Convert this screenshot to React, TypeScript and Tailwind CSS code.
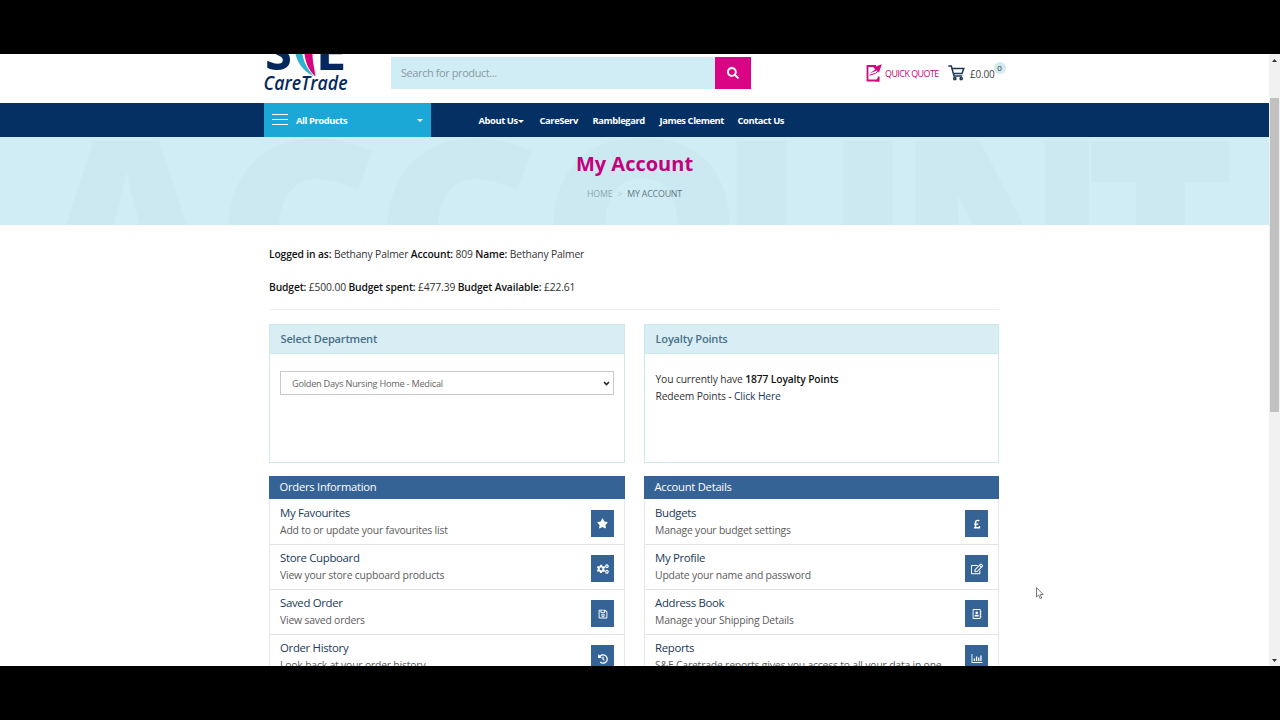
import type { ReactNode } from "react";
import {
  FaStar,
  FaCogs,
  FaRegSave,
  FaHistory,
  FaPoundSign,
  FaRegEdit,
  FaRegAddressBook,
  FaSearch,
} from "react-icons/fa";

function Logo() {
  return (
    <svg className="block h-[40px] w-[90px]" viewBox="0 0 90 40">
      <g fill="#04285c" fontFamily="Open Sans, sans-serif">
        <text x="1" y="15.6" fontSize="50" fontWeight="700" textLength="27" lengthAdjust="spacingAndGlyphs">S</text>
        <text x="51.5" y="15.6" fontSize="50" fontWeight="700" textLength="31" lengthAdjust="spacingAndGlyphs">E</text>
      </g>
      <path d="M31.5 0C33.5 9 39 17 50 22.5C43.5 15 39.5 8 38.5 0Z" fill="#2fb0cf" />
      <path d="M40.5 0C41.5 9 45 17 51.5 22.5C50.5 14 48.5 8 48.5 0Z" fill="#d6057f" />
      <text
        x="-0.5"
        y="35.5"
        fontFamily="Open Sans, sans-serif"
        fontSize="19"
        fontStyle="italic"
        fontWeight="600"
        fill="#04285c"
        textLength="84"
        lengthAdjust="spacingAndGlyphs"
      >
        CareTrade
      </text>
    </svg>
  );
}

function QuoteIcon() {
  return (
    <svg className="block h-[18px] w-[16px]" viewBox="0 0 16 18" fill="none">
      <path d="M10 2H1.5V16.5H12.5V12.5" stroke="#cf0a80" strokeWidth="1.8" />
      <path d="M15.8 0.2L7 3.6L9.4 5.2L3.6 9.6L10.6 6.6L13 8.4Z" fill="#cf0a80" />
      <path d="M3.5 11.2L9.5 9.4L12 7.5" stroke="#cf0a80" strokeWidth="1" />
      <path d="M9 17.4L13.3 12.6V17.4Z" fill="#cf0a80" />
    </svg>
  );
}

function CartIcon() {
  return (
    <svg className="block h-[16px] w-[17px]" viewBox="0 0 17 16" fill="none" stroke="#1d3557" strokeWidth="1.5">
      <path d="M0.3 1H3.3L6 11H14.2M4 3.4H15.8L14 8.6H5.4" />
      <circle cx="6.8" cy="13.6" r="1.1" />
      <circle cx="13.2" cy="13.6" r="1.1" />
    </svg>
  );
}

function BarChartIcon() {
  return (
    <svg width="12" height="11" viewBox="0 0 12 11" fill="currentColor">
      <path d="M0.5 1H1.4V9H11.5V9.9H0.5ZM2.7 5.6H4V8.1H2.7ZM4.9 3.6H6.2V8.1H4.9ZM7.1 4.6H8.4V8.1H7.1ZM9.3 2.4H10.6V8.1H9.3Z" />
    </svg>
  );
}

function Caret() {
  return (
    <svg width="6" height="3" viewBox="0 0 6 3">
      <path d="M0 0H6L3 3Z" fill="#fff" />
    </svg>
  );
}

function Header() {
  return (
    <header className="flex h-[49px] shrink-0 pl-[264px]">
      <Logo />
      <div className="ml-[37px] mt-[3px] flex h-[32px] w-[360px]">
        <div className="flex flex-1 items-center bg-[#d0ecf4] pl-[10px] text-[11px] tracking-[-0.42px] text-[#8a9ba5]">
          Search for product...
        </div>
        <div className="flex w-[36px] items-center justify-center bg-[#da0584] text-white">
          <FaSearch size={12} />
        </div>
      </div>
      <div className="ml-[115px] mt-[10px] flex h-[18px] items-center">
        <QuoteIcon />
        <span className="ml-[3px] w-[63px] whitespace-nowrap pt-px text-[8.9px] tracking-[-0.5px] text-[#b80a72]">QUICK QUOTE</span>
        <CartIcon />
        <span className="ml-[5px] mt-[3px] text-[10px] tracking-[-0.2px] text-[#444]">£0.00</span>
        <span className="-ml-px -mt-[10px] flex size-[12px] items-center justify-center rounded-full bg-[#d3e9f0] text-[8px] text-[#333]">
          0
        </span>
      </div>
    </header>
  );
}

function Nav() {
  return (
    <nav className="flex h-[34px] shrink-0 items-stretch bg-[#043064] pl-[264px] text-[9.4px] font-bold tracking-[-0.42px] text-white">
      <div className="flex w-[167px] items-center bg-[#1ba8d7] pl-[8px] pr-[8px]">
        <div className="flex w-[16px] flex-col gap-[4px] pb-px">
          <i className="h-px bg-white" />
          <i className="h-px bg-white" />
          <i className="h-px bg-white" />
        </div>
        <span className="ml-[8px] flex-1 pt-[2px]">All Products</span>
        <Caret />
      </div>
      <div className="ml-[47.5px] flex items-center whitespace-nowrap pt-[2px]">
        <span className="w-[39px]">About Us</span>
        <span className="w-[22px]">
          <Caret />
        </span>
        <span className="w-[53px]">CareServ</span>
        <span className="w-[67px]">Ramblegard</span>
        <span className="w-[78px]">James Clement</span>
        <span>Contact Us</span>
      </div>
    </nav>
  );
}

function Banner() {
  return (
    <section className="relative h-[88px] shrink-0 overflow-hidden bg-[#d0ecf4] text-center">
      <svg className="absolute inset-0" width="1269" height="88" viewBox="0 0 1269 88" aria-hidden="true">
        <text
          x="34 215 374 540 718 896 1085"
          y="187"
          fontFamily="Open Sans, sans-serif"
          fontWeight="800"
          fontSize="255"
          fill="#cce9f1"
        >
          ACCOUNT
        </text>
      </svg>
      <div className="relative">
        <h1 className="pt-[13px] text-[20px] font-bold leading-[28px] text-[#c5007c]">My Account</h1>
        <p className="mt-[9px] flex justify-center text-[8.8px] leading-[14px] tracking-[-0.18px] text-[#5f7883]">
          <span className="text-[#8fa6ae]">HOME</span>
          <span className="mx-[5px] text-[#b5ccd4]">&gt;</span>
          <span>MY ACCOUNT</span>
        </p>
      </div>
    </section>
  );
}

function Card({ title, children }: { title: string; children: ReactNode }) {
  return (
    <div className="h-[139px] border border-[#cbe9ea] bg-white">
      <div className="flex h-[29px] items-center border-b border-[#cbe9ea] bg-[#d9eef4] pl-[10.5px] text-[11.1px] font-semibold tracking-[-0.21px] text-[#4a7088]">
        {title}
      </div>
      <div className="px-[10px]">{children}</div>
    </div>
  );
}

type Row = { title: string; text: string; icon: ReactNode };

const orders: Row[] = [
  { title: "My Favourites", text: "Add to or update your favourites list", icon: <FaStar size={11} /> },
  { title: "Store Cupboard", text: "View your store cupboard products", icon: <FaCogs size={12} /> },
  { title: "Saved Order", text: "View saved orders", icon: <FaRegSave size={10} /> },
  { title: "Order History", text: "Look back at your order history", icon: <FaHistory size={10} /> },
];

const account: Row[] = [
  { title: "Budgets", text: "Manage your budget settings", icon: <FaPoundSign size={10} /> },
  { title: "My Profile", text: "Update your name and password", icon: <FaRegEdit size={12} /> },
  { title: "Address Book", text: "Manage your Shipping Details", icon: <FaRegAddressBook size={10} /> },
  { title: "Reports", text: "S&E Caretrade reports gives you access to all your data in one", icon: <BarChartIcon /> },
];

function Panel({ title, rows }: { title: string; rows: Row[] }) {
  return (
    <div>
      <h2 className="h-[23px] bg-[#366396] pl-[10.5px] text-[11.2px] leading-[22px] tracking-[-0.24px] text-white">{title}</h2>
      <div className="border-x border-[#e6e6e6] pt-px">
        {rows.map((row) => (
          <div key={row.title} className="flex h-[45px] items-start border-b border-[#e3e3e3] pl-[10px] pr-[10px]">
            <div className="min-w-0 flex-1 whitespace-nowrap pt-[5px]">
              <div className="text-[11.4px] leading-[16px] tracking-[-0.32px] text-[#20395a]">{row.title}</div>
              <div className="pt-px text-[10.4px] leading-[17px] tracking-[-0.19px] text-[#5c5c5c]">{row.text}</div>
            </div>
            <div className="mt-[10px] flex h-[27px] w-[23px] items-center justify-center bg-[#366396] text-white">
              {row.icon}
            </div>
          </div>
        ))}
      </div>
    </div>
  );
}

function Scrollbar() {
  return (
    <div className="flex w-[11px] shrink-0 flex-col items-center bg-[#f1f1f1]">
      <svg width="5" height="3" viewBox="0 0 5 3" className="mt-[5px]">
        <path d="M0 3H5L2.5 0Z" fill="#333" />
      </svg>
      <div className="mt-[36px] h-[314px] w-[9px] bg-[#c1c1c1]" />
      <svg width="5" height="3" viewBox="0 0 5 3" className="mb-[4px] mt-auto">
        <path d="M0 0H5L2.5 3Z" fill="#333" />
      </svg>
    </div>
  );
}

export default function App() {
  return (
    <div className="h-[720px] w-[1280px] overflow-hidden bg-black py-[54px] font-['Open_Sans',sans-serif]">
      <div className="relative flex h-[612px] overflow-hidden bg-white">
        <div className="flex w-[1269px] flex-col overflow-hidden">
          <Header />
          <Nav />
          <Banner />
          <main className="ml-[269px] w-[730px] text-[10.3px] tracking-[-0.14px] text-[#333]">
            <p className="mt-[21px] leading-[17px]">
              <b className="font-semibold text-[#111]">Logged in as:</b> Bethany Palmer{" "}
              <b className="font-semibold text-[#111]">Account:</b> 809{" "}
              <b className="font-semibold text-[#111]">Name:</b> Bethany Palmer
            </p>
            <p className="mt-[16px] leading-[17px]">
              <b className="font-semibold text-[#111]">Budget:</b> £500.00{" "}
              <b className="font-semibold text-[#111]">Budget spent:</b> £477.39{" "}
              <b className="font-semibold text-[#111]">Budget Available:</b> £22.61
            </p>
            <hr className="mt-[13px] border-[#eee]" />
            <div className="mt-[14px] grid grid-cols-[356px_355px] gap-x-[19px] gap-y-[13px]">
              <Card title="Select Department">
                <div className="mt-[17px] flex h-[24px] items-center justify-between border border-[#c9c9c9] pl-[11px] pr-[3px] text-[9.2px] tracking-[-0.25px] text-[#666]">
                  <span className="pt-[2px]">Golden Days Nursing Home - Medical</span>
                  <svg width="7" height="5" viewBox="0 0 7 5" fill="none">
                    <path d="M1 1L3.5 3.6L6 1" stroke="#222" strokeWidth="1.5" />
                  </svg>
                </div>
              </Card>
              <Card title="Loyalty Points">
                <p className="mt-[17px] pl-[0.5px] leading-[17px]">
                  You currently have <b className="font-semibold text-[#111]">1877 Loyalty Points</b>
                  <br />
                  Redeem Points - <span className="text-[#20395a]">Click Here</span>
                </p>
              </Card>
              <Panel title="Orders Information" rows={orders} />
              <Panel title="Account Details" rows={account} />
            </div>
          </main>
        </div>
        <Scrollbar />
        <svg className="absolute left-[1036px] top-[533px]" width="8" height="13" viewBox="0 0 8 13">
          <path d="M0.5 0.8V10L2.7 8L4.2 11.7L5.7 11L4.3 7.5H7.3Z" fill="#fff" stroke="#555" strokeWidth="0.8" />
        </svg>
      </div>
    </div>
  );
}
